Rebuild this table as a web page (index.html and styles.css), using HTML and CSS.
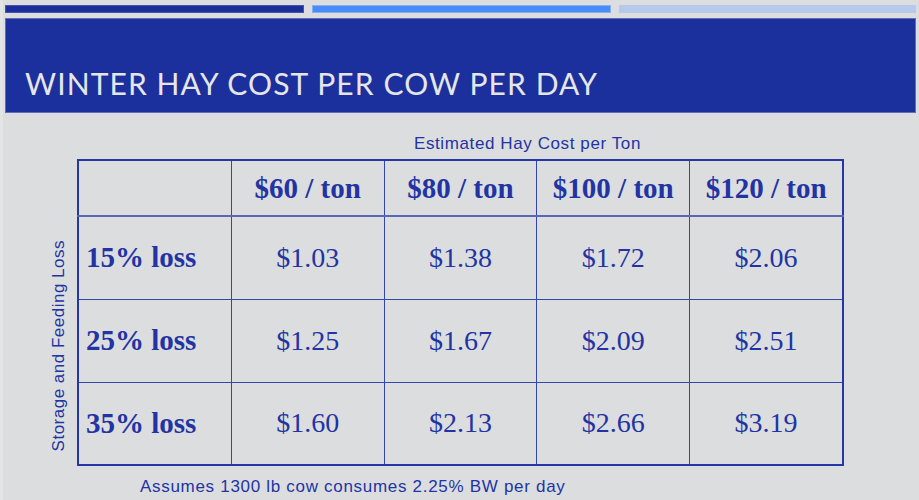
FILE: index.html
```html
<!DOCTYPE html>
<html>
<head>
<meta charset="utf-8">
<link rel="stylesheet" href="styles.css">
</head>
<body>
<div class="slide">
  <div class="bars">
    <div class="bar bar-dark"></div>
    <div class="bar bar-mid"></div>
    <div class="bar bar-light"></div>
  </div>
  <header class="title-band">
    <h1 class="title">WINTER HAY COST PER COW PER DAY</h1>
  </header>
  <main class="content">
    <div class="caption">Estimated Hay Cost per Ton</div>
    <div class="table-row">
      <div class="side-label">Storage and Feeding Loss</div>
      <table class="cost-table">
        <thead>
          <tr>
            <th class="corner"></th>
            <th>$60 / ton</th>
            <th>$80 / ton</th>
            <th>$100 / ton</th>
            <th>$120 / ton</th>
          </tr>
        </thead>
        <tbody>
          <tr class="r1">
            <th class="loss">15% loss</th>
            <td>$1.03</td><td>$1.38</td><td>$1.72</td><td>$2.06</td>
          </tr>
          <tr class="r2">
            <th class="loss">25% loss</th>
            <td>$1.25</td><td>$1.67</td><td>$2.09</td><td>$2.51</td>
          </tr>
          <tr class="r3">
            <th class="loss">35% loss</th>
            <td>$1.60</td><td>$2.13</td><td>$2.66</td><td>$3.19</td>
          </tr>
        </tbody>
      </table>
    </div>
    <div class="footnote">Assumes 1300 lb cow consumes 2.25% BW per day</div>
  </main>
</div>
</body>
</html>
```
FILE: styles.css
```css
html, body {
  margin: 0;
  padding: 0;
  background: #dcdddf;
}
.slide {
  width: 919px;
  height: 500px;
  overflow: hidden;
  background: #dcdddf;
  border-left: 3px solid #e3e4e6;
  box-sizing: border-box;
}
.bars {
  display: flex;
  gap: 8px;
  padding: 5px 3px 0 2px;
}
.bar {
  flex: 1;
  height: 8px;
  box-sizing: border-box;
}
.bar-dark { background: #1b2e9b; border: 1px solid #4455a8; }
.bar-mid { background: #4a8cf7; border: 1px solid #86aef0; }
.bar-light { background: #b6c9ea; }
.title-band {
  margin: 5px 3px 0 2px;
  height: 95px;
  background: #1b2f9d;
  border: 1px solid #5f6fb5;
  box-sizing: border-box;
  display: flex;
  align-items: flex-end;
  padding: 0 0 14px 19px;
}
.title {
  margin: 0;
  font-family: Lato, "Open Sans", sans-serif;
  font-weight: 400;
  font-size: 30px;
  line-height: 30px;
  color: #e6e6e8;
  letter-spacing: 1.1px;
}
.content {
  display: flex;
  flex-direction: column;
}
.caption {
  margin: 21px 0 0 411px;
  font-family: "Liberation Sans", Arial, sans-serif;
  font-size: 17px;
  line-height: 19px;
  letter-spacing: 0.6px;
  color: #2234a3;
}
.table-row {
  display: flex;
  align-items: center;
  margin-top: 6px;
}
.side-label {
  writing-mode: vertical-rl;
  transform: rotate(180deg);
  font-family: "Liberation Sans", Arial, sans-serif;
  font-size: 17px;
  line-height: 16px;
  letter-spacing: 0.5px;
  color: #2234a3;
  width: 16px;
  margin: 66px 10px 0 48px;
  white-space: nowrap;
}
.cost-table {
  border-collapse: collapse;
  border: 2px solid #2436a8;
  table-layout: fixed;
  width: 767px;
  font-family: "Liberation Serif", "Times New Roman", serif;
  color: #2234a3;
}
.cost-table th, .cost-table td {
  border: 1px solid #3546ad;
  padding: 0;
  text-align: center;
  width: 20%;
}
.cost-table thead tr { height: 56px; }
.cost-table thead th {
  font-size: 29px;
  font-weight: 700;
  border-bottom: 2px solid #5a68b8;
}
.cost-table tbody tr { height: 83px; }
.cost-table td {
  font-size: 28px;
  font-weight: 400;
}
.cost-table th.loss {
  text-align: left;
  padding-left: 7px;
  font-size: 29px;
  font-weight: 700;
}
.footnote {
  margin: 11px 0 0 137px;
  font-family: "Liberation Sans", Arial, sans-serif;
  font-size: 17px;
  line-height: 19px;
  letter-spacing: 0.7px;
  color: #2234a3;
}
```
